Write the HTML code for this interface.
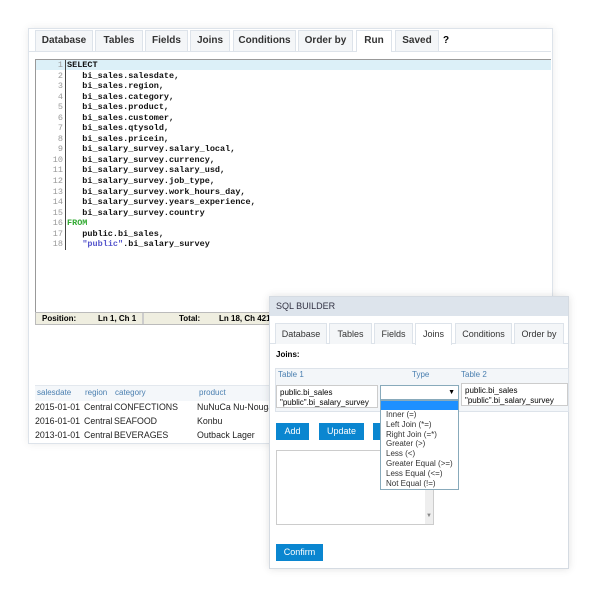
<!DOCTYPE html>
<html><head><style>
body{margin:0;width:600px;height:600px;background:#fff;font-family:"Liberation Sans",sans-serif;position:relative;overflow:hidden}
.a{position:absolute}
.tab{position:absolute;top:30px;height:21px;background:#f4f6f8;border:1px solid #dde3ea;border-bottom:none;font-size:10px;font-weight:bold;color:#333;text-align:center;line-height:20px;box-sizing:border-box}
.code{font-family:"Liberation Mono",monospace;font-size:8.5px;line-height:10.55px;white-space:pre;color:#111;font-weight:bold}
.tab2{position:absolute;top:323px;height:21px;background:#f4f6f8;border:1px solid #dde3ea;border-bottom:none;font-size:9px;color:#333;text-align:center;line-height:20px;box-sizing:border-box}
.btn{position:absolute;top:423px;height:17px;background:#0a86d0;color:#fff;font-size:9px;text-align:center;line-height:17px}
.dd div{height:9.8px;line-height:9.8px;padding-left:5px}
.r{position:absolute;font-size:8.8px;color:#222;white-space:nowrap}
.h{position:absolute;top:388px;font-size:8px;color:#4a7fb0}
</style></head><body>
<div class="a" style="left:28px;top:28px;width:523px;height:414px;border:1px solid #dde3ea;box-shadow:0 0 8px rgba(0,0,0,.08)"></div>
<div class="a" style="left:29px;top:51px;width:522px;height:1px;background:#dde3ea"></div>
<div class="tab" style="left:35px;width:58px">Database</div>
<div class="tab" style="left:95px;width:48px">Tables</div>
<div class="tab" style="left:145px;width:43px">Fields</div>
<div class="tab" style="left:190px;width:40px">Joins</div>
<div class="tab" style="left:233px;width:63px">Conditions</div>
<div class="tab" style="left:298px;width:55px">Order by</div>
<div class="tab" style="left:356px;width:36px;background:#fff;height:22px">Run</div>
<div class="tab" style="left:395px;width:44px">Saved</div>
<div class="a" style="left:443px;top:35px;font-size:10px;font-weight:bold">?</div>
<div class="a" style="left:35px;top:59px;width:516px;height:266px;border:1px solid #999;border-right:none;box-sizing:border-box"></div>
<div class="a" style="left:36px;top:60px;width:515px;height:10px;background:#dcf0f8"></div>
<div class="a" style="left:65px;top:60px;width:1px;height:190px;background:#444"></div>
<div class="a code" style="left:36px;top:60px;width:27px;text-align:right;color:#999;font-weight:normal">1
2
3
4
5
6
7
8
9
10
11
12
13
14
15
16
17
18</div>
<div class="a code" style="left:67px;top:60px">SELECT
   bi_sales.salesdate,
   bi_sales.region,
   bi_sales.category,
   bi_sales.product,
   bi_sales.customer,
   bi_sales.qtysold,
   bi_sales.pricein,
   bi_salary_survey.salary_local,
   bi_salary_survey.currency,
   bi_salary_survey.salary_usd,
   bi_salary_survey.job_type,
   bi_salary_survey.work_hours_day,
   bi_salary_survey.years_experience,
   bi_salary_survey.country
<span style="color:#3a3">FROM</span>
   public.bi_sales,
   <span style="color:#55c">"public"</span>.bi_salary_survey</div>
<div class="a" style="left:35px;top:312px;width:516px;height:13px;background:#efeee0;border:1px solid #bbb;box-sizing:border-box;font-size:8px;font-weight:bold;line-height:11px">
<span class="a" style="left:6px">Position:</span><span class="a" style="left:62px">Ln 1, Ch 1</span>
<span class="a" style="left:106px;top:0;width:2px;height:11px;background:#ccc"></span>
<span class="a" style="left:143px">Total:</span><span class="a" style="left:183px">Ln 18, Ch 421</span></div>
<div class="a" style="left:35px;top:385px;width:240px;height:15px;background:#f4f7fa;border-top:1px solid #e3e8ee"></div>
<div class="h" style="left:37px">salesdate</div><div class="h" style="left:85px">region</div><div class="h" style="left:115px">category</div><div class="h" style="left:199px">product</div>
<div class="r" style="left:35px;top:402px">2015-01-01</div><div class="r" style="left:84px;top:402px">Central</div><div class="r" style="left:114px;top:402px">CONFECTIONS</div><div class="r" style="left:197px;top:402px">NuNuCa Nu-Nougat</div>
<div class="r" style="left:35px;top:416px">2016-01-01</div><div class="r" style="left:84px;top:416px">Central</div><div class="r" style="left:114px;top:416px">SEAFOOD</div><div class="r" style="left:197px;top:416px">Konbu</div>
<div class="r" style="left:35px;top:430px">2013-01-01</div><div class="r" style="left:84px;top:430px">Central</div><div class="r" style="left:114px;top:430px">BEVERAGES</div><div class="r" style="left:197px;top:430px">Outback Lager</div>
<div class="a" style="left:269px;top:296px;width:300px;height:273px;background:#fff;border:1px solid #d5dbe2;box-shadow:0 0 8px rgba(0,0,0,.12);box-sizing:border-box"></div>
<div class="a" style="left:270px;top:297px;width:298px;height:19px;background:#dde4ec;font-size:9px;color:#334;line-height:19px;padding-left:6px;box-sizing:border-box">SQL BUILDER</div>
<div class="a" style="left:270px;top:343px;width:298px;height:1px;background:#dde3ea"></div>
<div class="tab2" style="left:275px;width:52px">Database</div>
<div class="tab2" style="left:329px;width:43px">Tables</div>
<div class="tab2" style="left:374px;width:39px">Fields</div>
<div class="tab2" style="left:415px;width:37px;background:#fff;height:22px">Joins</div>
<div class="tab2" style="left:455px;width:57px">Conditions</div>
<div class="tab2" style="left:514px;width:50px">Order by</div>
<div class="a" style="left:276px;top:350px;font-size:8px;font-weight:bold">Joins:</div>
<div class="a" style="left:275px;top:368px;width:294px;height:44px;background:#f3f6f9;border:1px solid #dde3ea;box-sizing:border-box"></div>
<div class="a" style="left:278px;top:370px;font-size:8px;color:#4a7fb0">Table 1</div>
<div class="a" style="left:412px;top:370px;font-size:8px;color:#4a7fb0">Type</div>
<div class="a" style="left:461px;top:370px;font-size:8px;color:#4a7fb0">Table 2</div>
<div class="a" style="left:276px;top:385px;width:102px;height:23px;background:#fff;border:1px solid #ccc;box-sizing:border-box;font-size:8px;line-height:9.5px;padding:2px 3px">public.bi_sales<br>"public".bi_salary_survey</div>
<div class="a" style="left:461px;top:383px;width:107px;height:23px;background:#fff;border:1px solid #ccc;box-sizing:border-box;font-size:8px;line-height:9.5px;padding:2px 3px">public.bi_sales<br>"public".bi_salary_survey</div>
<div class="a" style="left:380px;top:385px;width:79px;height:15px;background:#fff;border:1px solid #8ab;box-sizing:border-box;font-size:7px;text-align:right;padding-right:3px;line-height:13px">▼</div>
<div class="btn" style="left:276px;width:33px">Add</div>
<div class="btn" style="left:319px;width:45px">Update</div>
<div class="btn" style="left:373px;width:71px;text-align:right;padding-right:2px;box-sizing:border-box">t</div>
<div class="a" style="left:276px;top:450px;width:158px;height:75px;border:1px solid #ccc;box-sizing:border-box"></div>
<div class="a" style="left:425px;top:451px;width:8px;height:73px;background:#eee;font-size:6px;color:#888;text-align:center;line-height:130px">▼</div>
<div class="a dd" style="left:380px;top:400px;width:79px;height:90px;background:#fff;border:1px solid #8ab;box-sizing:border-box;font-size:8px;color:#333">
<div style="background:#1e90ff;height:9px"></div><div>Inner (=)</div><div>Left Join (*=)</div><div>Right Join (=*)</div><div>Greater (&gt;)</div><div>Less (&lt;)</div><div>Greater Equal (&gt;=)</div><div>Less Equal (&lt;=)</div><div>Not Equal (!=)</div></div>
<div class="btn" style="left:276px;top:544px;width:47px">Confirm</div>
</body></html>
